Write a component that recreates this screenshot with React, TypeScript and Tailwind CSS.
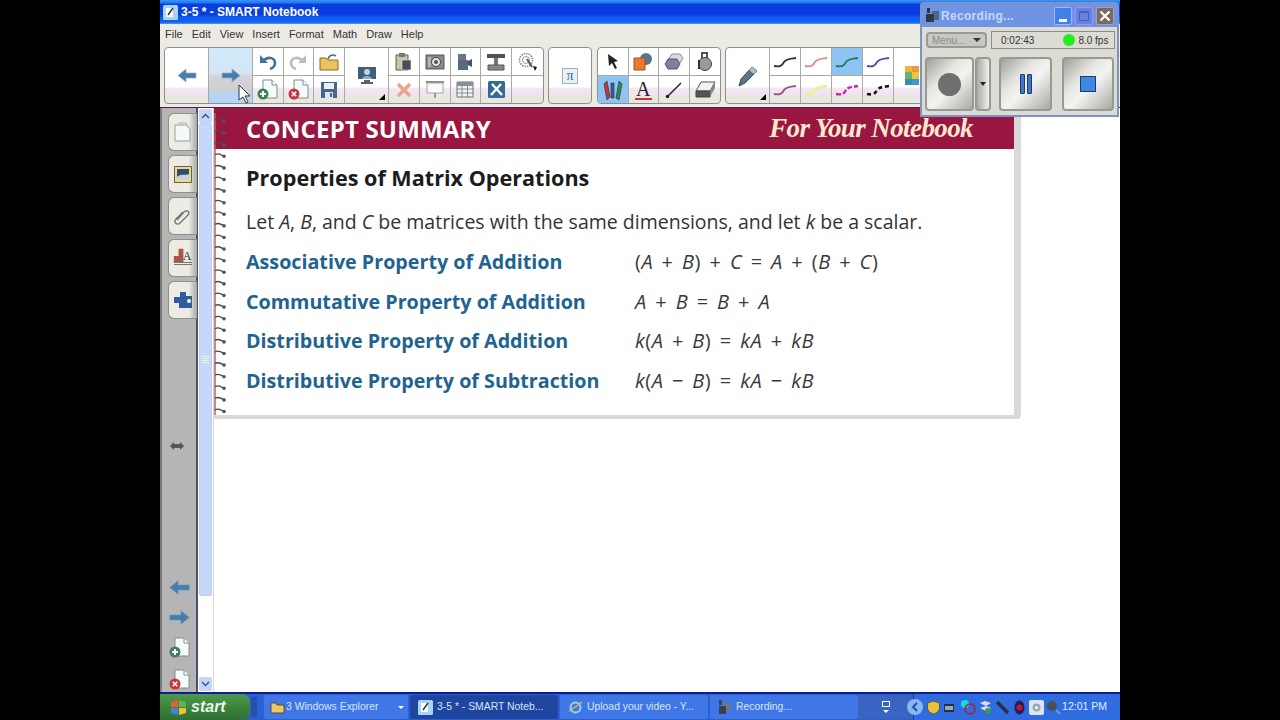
import React from 'react';

const uiFont = "font-['Liberation_Sans',sans-serif]";
const pageFont = "font-['Open_Sans',sans-serif]";

const Arrow = ({ left = false, w = 20, color = '#4b7ca8' }: { left?: boolean; w?: number; color?: string }) => (
  <svg width={w} height={Math.round(w * 0.75)} viewBox="0 0 20 15" className={left ? 'rotate-180' : ''}>
    <path d="M1 5h10V1l8 6.5L11 14v-4H1z" fill={color} stroke="#8fb0cc" strokeWidth="0.8" />
  </svg>
);

const PageIcon = ({ badge }: { badge: 'plus' | 'x' }) => (
  <svg width="21" height="21" viewBox="0 0 21 21">
    <path d="M6 1h9l5 5v13H6z" fill="#f4fbfb" stroke="#8a8a8a" />
    <path d="M15 1v5h5" fill="#fff" stroke="#8a8a8a" />
    <circle cx="6" cy="15" r="5.5" fill={badge === 'plus' ? '#3f7f55' : '#c8343c'} />
    {badge === 'plus' ? (
      <path d="M3 15h6M6 12v6" stroke="#fff" strokeWidth="2" />
    ) : (
      <path d="M3.8 12.8l4.4 4.4M8.2 12.8l-4.4 4.4" stroke="#fff" strokeWidth="1.6" />
    )}
  </svg>
);

const Undo = ({ flip = false, color = '#4a6f96' }: { flip?: boolean; color?: string }) => (
  <svg width="20" height="20" viewBox="0 0 20 20" className={flip ? '-scale-x-100' : ''}>
    <path d="M6 8c5-4 11-2 11 3 0 3-2 5-5 6" fill="none" stroke={color} strokeWidth="2.6" />
    <path d="M2 3v8h8z" fill={color} />
  </svg>
);

const PiBox = () => (
  <div className="relative flex items-center justify-center">
    <svg width="16" height="16" viewBox="0 0 16 16">
      <path d="M.5.500h15v15H.5z" fill="#e8f2f6" stroke="#9ab0bc" />
    </svg>
    <span className="absolute font-['Liberation_Serif',serif] text-[14px] text-[#356a94] leading-none">π</span>
  </div>
);

const Icons: Record<string, React.ReactNode> = {
  undo: <Undo />,
  redo: <Undo flip color="#b4bcc4" />,
  folder: (
    <svg width="20" height="18" viewBox="0 0 20 18">
      <path d="M1 5h6l2 2h10v10H1z" fill="#ecc25f" stroke="#8a6d2a" />
      <path d="M9 6c1-4 5-5 8-3" fill="none" stroke="#566a7a" strokeWidth="1.6" />
    </svg>
  ),
  newPage: <PageIcon badge="plus" />,
  delPage: <PageIcon badge="x" />,
  save: (
    <svg width="18" height="18" viewBox="0 0 18 18">
      <path d="M1 1h16v16H1z" fill="#46668a" />
      <path d="M4 2h10v6H4z" fill="#e8eef2" />
      <path d="M5 11h8v6H5z" fill="#dfe4e8" />
      <path d="M10 12h2v4h-2z" fill="#46668a" />
    </svg>
  ),
  monitor: (
    <svg width="20" height="19" viewBox="0 0 20 19">
      <path d="M1 1h18v12H1z" fill="#3f6076" />
      <circle cx="10" cy="6" r="3" fill="#b9d4e2" />
      <path d="M5 13c1-4 9-4 10 0z" fill="#8fb2c6" />
      <path d="M7 14h6v2h3v2H4v-2h3z" fill="#51636f" />
    </svg>
  ),
  clipboard: (
    <svg width="17" height="19" viewBox="0 0 17 19">
      <path d="M1 3h12v15H1z" fill="#c9c2a8" stroke="#5a5a52" />
      <path d="M4 1h6v4H4z" fill="#777" />
      <path d="M7 8h9v10H7z" fill="#46505a" stroke="#eee" strokeWidth="0.6" />
    </svg>
  ),
  camera: (
    <svg width="20" height="17" viewBox="0 0 20 17">
      <path d="M1 2h18v14H1z" fill="#8b8986" stroke="#555" />
      <circle cx="11" cy="9" r="4.5" fill="#e6e6e2" stroke="#444" />
      <circle cx="11" cy="9" r="2" fill="#555" />
      <path d="M3 4h3v10H3z" fill="#b9b6b0" />
    </svg>
  ),
  video: (
    <svg width="16" height="18" viewBox="0 0 16 18">
      <path d="M1 1h8v6H1z" fill="#6c7680" />
      <path d="M1 7h10v10H1z" fill="#5a6a78" />
      <path d="M11 8l4-2v8l-4-2z" fill="#49525c" />
    </svg>
  ),
  capture: (
    <svg width="20" height="18" viewBox="0 0 20 18">
      <path d="M1 1h18v4H1z" fill="#55534f" />
      <path d="M8 5h4v7H8z" fill="#777" />
      <path d="M2 12h16v5H2z" fill="#8a8884" stroke="#555" />
    </svg>
  ),
  compass: (
    <svg width="20" height="20" viewBox="0 0 20 20">
      <circle cx="8" cy="8" r="6.5" fill="none" stroke="#8a8a8a" strokeWidth="1.6" strokeDasharray="1.5 1" />
      <circle cx="8" cy="8" r="3.5" fill="none" stroke="#9a9a9a" />
      <path d="M9 7l5 8" stroke="#555" strokeWidth="2" />
      <path d="M15 14l4 1-2 4z" fill="#111" />
    </svg>
  ),
  cross: (
    <svg width="16" height="16" viewBox="0 0 16 16">
      <path d="M2 2l12 12M14 2L2 14" stroke="#e8a590" strokeWidth="3.4" />
    </svg>
  ),
  screen: (
    <svg width="20" height="20" viewBox="0 0 20 20">
      <path d="M1 1h18v2H1z" fill="#8f8a7c" />
      <path d="M2 3h16v10H2z" fill="#f6fbfa" stroke="#a8a8a0" />
      <path d="M10 13v5" stroke="#777" strokeWidth="1.4" />
    </svg>
  ),
  table: (
    <svg width="18" height="17" viewBox="0 0 18 17">
      <path d="M1 1h16v15H1z" fill="#f2f4f2" stroke="#6a7278" />
      <path d="M1 4.5h16M1 8h16M1 12h16M6 1v15M11.500 1v15" stroke="#7c8488" strokeWidth="0.9" />
      <path d="M1 1h16v3.500H1z" fill="#8a9298" />
    </svg>
  ),
  tools: (
    <svg width="17" height="17" viewBox="0 0 17 17">
      <rect width="17" height="17" rx="1.500" fill="#356a94" />
      <path d="M4 3l10 11M13 3L3 14" stroke="#fff" strokeWidth="2.400" />
    </svg>
  ),
  pointer: (
    <svg width="14" height="17" viewBox="0 0 14 17">
      <path d="M2 1l10 7-4 1 3 6-2 1-3-6-3 3z" fill="#222" />
    </svg>
  ),
  shapes: (
    <svg width="20" height="19" viewBox="0 0 20 19">
      <circle cx="13" cy="7" r="6" fill="#56788e" />
      <path d="M1 6h11v12H1z" fill="#ea7a2a" stroke="#a8501a" />
    </svg>
  ),
  hex: (
    <svg width="20" height="17" viewBox="0 0 20 17">
      <path d="M8 1h8l3 4-3 5H8L5 5z" fill="#d7dce2" stroke="#8a8a96" />
      <path d="M4 6h9l3 5-3 5H4l-3-5z" fill="#8a7aa2" stroke="#5e5274" />
    </svg>
  ),
  fill: (
    <svg width="18" height="20" viewBox="0 0 18 20">
      <path d="M6 1h5v6H6z" fill="none" stroke="#555" strokeWidth="2" />
      <circle cx="9" cy="12" r="6.500" fill="#9a9a9a" stroke="#444" />
      <path d="M3 8v9" stroke="#333" strokeWidth="2" />
    </svg>
  ),
  pens: (
    <svg width="22" height="22" viewBox="0 0 22 22">
      <path d="M2 5l3-3 3 16-3 3z" fill="#c43a3a" stroke="#334" strokeWidth="0.7" />
      <path d="M9 4h3v15H9z" fill="#3a5f9a" stroke="#334" strokeWidth="0.7" />
      <path d="M17 2l3 3-3 16-3-2z" fill="#2f8a54" stroke="#334" strokeWidth="0.7" />
    </svg>
  ),
  textA: (
    <div className="flex flex-col items-center">
      <span className="font-['Liberation_Serif',serif] text-[20px] leading-[18px] text-[#222]">A</span>
      <span className="w-[17px] h-[2px] bg-[#c33]" />
    </div>
  ),
  line: (
    <svg width="18" height="18" viewBox="0 0 18 18">
      <path d="M2 16L16 2" stroke="#222" strokeWidth="1.500" />
      <circle cx="2.500" cy="15.500" r="1.800" fill="#222" />
    </svg>
  ),
  eraser: (
    <svg width="22" height="19" viewBox="0 0 22 19">
      <path d="M7 2h14l-5 9H2z" fill="#f2f2f2" stroke="#555" />
      <path d="M2 11h14v6H2z" fill="#555" stroke="#444" />
      <path d="M16 11l5-9v6l-5 9z" fill="#888" />
    </svg>
  ),
};

const Cell = ({ icon, active, noBorderRight }: { icon?: string; active?: boolean; noBorderRight?: boolean }) => (
  <div
    className={`h-[28px] flex items-center justify-center border-b border-[#a9a9a5] ${noBorderRight ? '' : 'border-r'} ${active ? 'bg-[#8ec4f4]' : ''}`}
  >
    {icon && Icons[icon]}
  </div>
);

const Squiggle = ({ color, dash, width = 1.8 }: { color: string; dash?: string; width?: number }) => (
  <svg width="24" height="14" viewBox="0 0 24 14">
    <path d="M1 11c6 1 8 0 10-4 2-3 6-3 12-4" fill="none" stroke={color} strokeWidth={width} strokeDasharray={dash} />
  </svg>
);

const Group = ({ children, className = '' }: { children: React.ReactNode; className?: string }) => (
  <div
    className={`h-[57px] flex shrink-0 rounded-[4px] border border-[#8f8f8f] overflow-hidden bg-[linear-gradient(#ffffff_0%,#ffffff_71%,#f4e7f4_73%,#f0e4f0_84%,#e8e7e0_87%,#e8e7e0_100%)] ${className}`}
  >
    {children}
  </div>
);

const BigCell = ({ children, w, active }: { children?: React.ReactNode; w: string; active?: boolean }) => (
  <div
    className={`relative h-full flex items-center justify-center border-r border-[#a9a9a5] shrink-0 ${w} ${active ? 'bg-[linear-gradient(#cfeafc_0%,#d4e6f6_45%,#d6d2dc_52%,#cfcfcf_78%,#b4d6f6_82%,#b4d6f6_100%)]' : ''}`}
  >
    {children}
  </div>
);

const Corner = () => <span className="absolute right-[3px] bottom-[3px] w-0 h-0 border-l-[6px] border-l-transparent border-b-[6px] border-b-black" />;

const penColours = [
  { color: '#333333' },
  { color: '#e38a8a' },
  { color: '#1f7a5a', active: true },
  { color: '#5f45a0' },
  { color: '#9a4f8c' },
  { color: '#f4ef80', width: 2.6 },
  { color: '#d020b0', dash: '5 2', width: 2.4 },
  { color: '#111111', dash: '4 3', width: 2.6 },
];

const Toolbar = () => (
  <div className="h-[63px] shrink-0 bg-[#ecebe3] flex items-start pl-[4px] pt-[3px] overflow-hidden">
    <Group className="w-[380px]">
      <BigCell w="w-[44px]"><Arrow left /></BigCell>
      <BigCell w="w-[44px]" active><Arrow /></BigCell>
      <div className="grid grid-cols-3 w-[92px] shrink-0">
        {['undo', 'redo', 'folder', 'newPage', 'delPage', 'save'].map((n) => <Cell key={n} icon={n} />)}
      </div>
      <BigCell w="w-[44px]">{Icons.monitor}<Corner /></BigCell>
      <div className="grid grid-cols-5 w-[154px] shrink-0">
        {['clipboard', 'camera', 'video', 'capture', 'compass', 'cross', 'screen', 'table', 'tools', ''].map((n, i) => (
          <Cell key={i} icon={n} noBorderRight={i === 4 || i === 9} />
        ))}
      </div>
    </Group>
    <Group className="w-[44px] ml-[4px] items-center justify-center">
      <PiBox />
    </Group>
    <Group className="ml-[5px] w-[124px]">
      <div className="grid grid-cols-4 w-full">
        {['pointer', 'shapes', 'hex', 'fill', 'pens', 'textA', 'line', 'eraser'].map((n, i) => (
          <Cell key={n} icon={n} active={i === 4} noBorderRight={i === 3 || i === 7} />
        ))}
      </div>
    </Group>
    <Group className="ml-[4px] w-[240px] rounded-r-none items-start">
      <BigCell w="w-[44px]">
        <svg width="22" height="22" viewBox="0 0 22 22">
          <path d="M15 2l5 4L8 18l-6 3 2-7z" fill="#5d7488" stroke="#3c4a58" />
          <path d="M15 2l5 4-3 3-5-4z" fill="#aebccb" />
        </svg>
        <Corner />
      </BigCell>
      <div className="grid grid-cols-4 w-[124px] shrink-0">
        {penColours.map((p, i) => (
          <div
            key={i}
            className={`h-[28px] flex items-center justify-center border-b border-r border-[#a9a9a5] ${p.active ? 'bg-[#8ec4f4]' : ''}`}
          >
            <Squiggle color={p.color} dash={p.dash} width={p.width} />
          </div>
        ))}
      </div>
      <div className="ml-[11px] mt-[18px] w-[14px] h-[19px] grid grid-cols-2 grid-rows-3 shrink-0">
        <span className="bg-[#e8b83a]" />
        <span className="bg-[#e89a3a]" />
        <span className="bg-[#6ab06a]" />
        <span className="bg-[#e8c83a]" />
        <span className="bg-[#3a8ab8]" />
        <span className="bg-[#3a9ac8]" />
      </div>
    </Group>
  </div>
);

const Tab = ({ children }: { children: React.ReactNode }) => (
  <div className="w-[29px] h-[38px] ml-[6px] rounded-l-[6px] border border-r-0 border-[#8f8f88] bg-[linear-gradient(90deg,#ecece4_70%,#a9a9a4_100%)] flex items-center justify-center pr-[1px]">
    {children}
  </div>
);

const Sidebar = () => (
  <div className="w-[38px] shrink-0 bg-[#b5b5b5] border-l-2 border-r-2 border-l-[#7a7a7a] border-r-[#4a5070] flex flex-col items-start">
    <div className="flex flex-col gap-[4px] pt-[5px]">
      <Tab>
        <svg width="17" height="20" viewBox="0 0 17 20">
          <path d="M1 3h11l4 4v12H1z" fill="#f2fafa" stroke="#9a9a9a" />
          <path d="M4 1h9v3" fill="none" stroke="#b5b5b5" />
        </svg>
      </Tab>
      <Tab>
        <svg width="18" height="17" viewBox="0 0 18 17">
          <path d="M.5.500h17v16H.5z" fill="#e8d8a0" stroke="#76612a" />
          <path d="M3 3h12v10H3z" fill="#2f4f66" />
          <path d="M3 11c4-4 8-1 12-3v5H3z" fill="#c2d4de" />
        </svg>
      </Tab>
      <Tab>
        <svg width="19" height="19" viewBox="0 0 19 19">
          <path d="M5 12l7-8c3-3 6 0 4 3l-8 8c-3 3-7-1-4-4l7-7" fill="none" stroke="#777" strokeWidth="1.400" transform="translate(-1 1)" />
        </svg>
      </Tab>
      <Tab>
        <div className="flex flex-col items-center leading-none">
          <span className="font-['Liberation_Serif',serif] text-[12px] leading-[11px] text-[#333] tracking-tight">
            <span className="text-[#a8574a]">▟</span>A
          </span>
          <span className="w-[18px] h-[3px] border-y border-[#777]" />
        </div>
      </Tab>
      <Tab>
        <svg width="20" height="18" viewBox="0 0 20 18">
          <path d="M7 1h6v4h6v12H6v-5H1V6h6z" fill="#2f5c9a" />
          <circle cx="16" cy="10" r="2" fill="#fff" />
        </svg>
      </Tab>
    </div>
    <div className="mt-[122px] ml-[7px]">
      <svg width="16" height="10" viewBox="0 0 16 10">
        <path d="M1 5l4-4v2h6V1l4 4-4 4V7H5v2z" fill="#555" />
      </svg>
    </div>
    <div className="mt-auto flex flex-col items-center gap-[11px] ml-[6px] pb-[2px]">
      <Arrow left w={23} />
      <div className="mt-[2px] flex"><Arrow w={23} /></div>
      <PageIcon badge="plus" />
      <PageIcon badge="x" />
    </div>
  </div>
);

const Scrollbar = () => (
  <div className="w-[16px] shrink-0 bg-white border-r border-[#d8d8d8] flex flex-col pt-[1px]">
    <div className="h-[14px] mx-[1px] rounded-[2px] bg-[#c4d5f8] flex items-center justify-center">
      <svg width="9" height="6" viewBox="0 0 9 6"><path d="M1 5l3.500-3.500L8 5" fill="none" stroke="#3a5a8a" strokeWidth="1.500" /></svg>
    </div>
    <div className="h-[473px] mx-[1px] rounded-[2px] bg-[#c5d7fb] border border-[#bcd0f4] flex flex-col items-center justify-center gap-[1px]">
      <span className="w-[7px] h-px bg-[#e8f0fe]" />
      <span className="w-[7px] h-px bg-[#e8f0fe]" />
      <span className="w-[7px] h-px bg-[#e8f0fe]" />
      <span className="w-[7px] h-px bg-[#e8f0fe]" />
    </div>
    <div className="flex-1" />
    <div className="h-[14px] mx-[1px] mb-[1px] rounded-[2px] bg-[#c4d5f8] flex items-center justify-center">
      <svg width="9" height="6" viewBox="0 0 9 6"><path d="M1 1l3.500 3.500L8 1" fill="none" stroke="#3a5a8a" strokeWidth="1.500" /></svg>
    </div>
  </div>
);

const spiralRows = Array.from({ length: 26 }, (_, i) => i);

const Spiral = () => (
  <svg className="absolute left-0 top-[5px]" width="14" height="305" viewBox="0 0 14 305">
    <path d="M1 0v302" stroke="#b9606e" strokeWidth="1.500" />
    {spiralRows.map((i) => {
      const y = 7 + i * 11.6;
      return (
        <g key={i}>
          <path d={`M1 ${y}c3-2 5-1 8 1`} fill="none" stroke="#4a4a4a" strokeWidth="1.300" />
          <circle cx="10" cy={y + 1.5} r="1.800" fill="#555" />
        </g>
      );
    })}
  </svg>
);

const rows: { title: string; formula: React.ReactNode }[] = [
  {
    title: 'Associative Property of Addition',
    formula: <>(<i>A</i> + <i>B</i>) + <i>C</i> = <i>A</i> + (<i>B</i> + <i>C</i>)</>,
  },
  { title: 'Commutative Property of Addition', formula: <><i>A</i> + <i>B</i> = <i>B</i> + <i>A</i></> },
  { title: 'Distributive Property of Addition', formula: <><i>k</i>(<i>A</i> + <i>B</i>) = <i>kA</i> + <i>kB</i></> },
  { title: 'Distributive Property of Subtraction', formula: <><i>k</i>(<i>A</i> − <i>B</i>) = <i>kA</i> − <i>kB</i></> },
];

const ConceptCard = () => (
  <div className="relative flex-1 bg-white overflow-hidden">
    <div className={`w-[807px] h-[311px] bg-[#d9d9d9] rounded-br-[4px] ${pageFont}`}>
      <div className="w-[800px] h-[307px] bg-white">
        <div className="h-[41px] bg-[#991640] rounded-tr-[8px] flex items-center justify-between pl-[32px] pr-[41px]">
          <span className="text-[24px] font-bold text-white tracking-[0.2px] whitespace-nowrap">CONCEPT SUMMARY</span>
          <span className="font-['Liberation_Serif',serif] italic font-bold text-[27px] text-[#fde9cf] tracking-[-0.6px] whitespace-nowrap">For Your Notebook</span>
        </div>
        <div className="pl-[32px]">
          <div className="text-[21.600px] font-bold text-[#1c1c1c] leading-[28px] mt-[15px]">Properties of Matrix Operations</div>
          <div className="text-[19.500px] text-[#333] leading-[28px] mt-[16px]">
            Let <i>A</i>, <i>B</i>, and <i>C</i> be matrices with the same dimensions, and let <i>k</i> be a scalar.
          </div>
          <div className="flex flex-col gap-[11.600px] mt-[11px]">
            {rows.map((r) => (
              <div key={r.title} className="grid grid-cols-[389px_1fr] h-[28px] items-center">
                <span className="text-[19.700px] font-bold text-[#1f6390]">{r.title}</span>
                <span className="text-[20px] text-[#3a3a3a] tracking-[0.5px] [word-spacing:2.8px] whitespace-pre">{r.formula}</span>
              </div>
            ))}
          </div>
        </div>
      </div>
    </div>
    <Spiral />
  </div>
);

const RaisedButton = ({ w, children }: { w: string; children: React.ReactNode }) => (
  <div className={`h-[54px] ${w} shrink-0 rounded-[4px] border-2 border-[#9a9a94] bg-[linear-gradient(135deg,#9f9f9c_0%,#e4e4e0_35%,#f4f4f2_55%,#a8a8a4_100%)] flex items-center justify-center`}>
    {children}
  </div>
);

const RecorderWindow = () => (
  <div className={`absolute left-[760px] top-[2px] w-[199px] h-[115px] bg-[#dddcd4] border-2 border-[#7e93bd] rounded-t-[4px] flex flex-col ${uiFont}`}>
    <div className="h-[23px] bg-[#6f94e6] flex items-center pl-[3px] pr-[3px] shrink-0">
      <svg width="16" height="18" viewBox="0 0 16 18" className="shrink-0">
        <path d="M2 1h3v5H2z" fill="#333" />
        <path d="M7 4h7v9H7z" fill="#456a86" />
        <path d="M1 7h8v8H1z" fill="#2c3a46" />
      </svg>
      <span className="text-[12px] text-[#c9d8f6] font-bold tracking-[0.3px] whitespace-nowrap">Recording...</span>
      <div className="ml-auto flex gap-[3px]">
        <div className="w-[18px] h-[18px] rounded-[2px] bg-[#3f80ea] border border-[#9dbbf2] flex items-end justify-center pb-[2px]">
          <span className="w-[8px] h-[3px] bg-white" />
        </div>
        <div className="w-[18px] h-[18px] rounded-[2px] bg-[#6a80de] border border-[#8a9ce6] flex items-center justify-center">
          <span className="w-[10px] h-[10px] border border-[#4d5fbd] border-t-2" />
        </div>
        <div className="w-[18px] h-[18px] rounded-[2px] bg-[#7b6a66] border border-[#a2a2b4] flex items-center justify-center">
          <svg width="12" height="12" viewBox="0 0 12 12"><path d="M1.500 1.500l9 9M10.500 1.500l-9 9" stroke="#fff" strokeWidth="2.200" /></svg>
        </div>
      </div>
    </div>
    <div className="flex items-center gap-[4px] pl-[4px] pr-[2px] pt-[4px]">
      <div className="w-[61px] h-[16px] rounded-[4px] border-2 border-[#9a9a94] bg-[#c8c8c2] flex items-center pl-[4px] text-[10px] text-[#8a8a84]">
        Menu...
        <span className="ml-auto mr-[4px] w-0 h-0 border-x-[4px] border-x-transparent border-t-[4px] border-t-[#333]" />
      </div>
      <div className="flex-1 h-[18px] border border-[#8c8c86] flex items-center pl-[9px] text-[10px] text-[#333] whitespace-nowrap">
        0:02:43
        <span className="ml-[29px] w-[12px] h-[12px] rounded-full bg-[#1ef01e] shrink-0" />
        <span className="ml-[3px]">8.0 fps</span>
      </div>
    </div>
    <div className="flex items-center pl-[3px] pt-[8px]">
      <RaisedButton w="w-[49px]"><span className="w-[23px] h-[23px] rounded-full bg-[#6f6f6f]" /></RaisedButton>
      <div className="w-[16px] h-[54px] ml-[1px] rounded-[4px] border-2 border-[#9a9a94] bg-[linear-gradient(90deg,#a8a8a4,#f0f0ee)] flex items-center justify-center">
        <span className="w-0 h-0 border-x-[3px] border-x-transparent border-t-[4px] border-t-[#222]" />
      </div>
      <div className="ml-[8px]">
        <RaisedButton w="w-[53px]">
          <div className="flex gap-[2px]">
            <span className="w-[5px] h-[20px] rounded-[1px] bg-[#3f78c8] border border-[#1f3a66]" />
            <span className="w-[5px] h-[20px] rounded-[1px] bg-[#3f78c8] border border-[#1f3a66]" />
          </div>
        </RaisedButton>
      </div>
      <div className="ml-[10px]">
        <RaisedButton w="w-[52px]"><span className="w-[16px] h-[16px] bg-[#3d8ae6] border border-[#1f3a66]" /></RaisedButton>
      </div>
    </div>
  </div>
);

const TaskButton = ({ w, active, icon, label, extra }: { w: string; active?: boolean; icon: React.ReactNode; label: string; extra?: React.ReactNode }) => (
  <div className={`h-[24px] ${w} shrink-0 rounded-[2px] flex items-center pl-[8px] gap-[4px] text-[10.400px] text-[#d8e4fb] ${active ? 'bg-[#1e469f]' : 'bg-[#3f78e6]'}`}>
    {icon}
    <span className="whitespace-pre">{label}</span>
    {extra}
  </div>
);

const NotebookIcon = () => (
  <svg width="15" height="15" viewBox="0 0 15 15" className="shrink-0">
    <rect width="15" height="15" rx="1.500" fill="#a8d4f0" />
    <path d="M3 3h7v9H3z" fill="#fff" />
    <path d="M5 10l5-7" stroke="#334" strokeWidth="1.500" />
  </svg>
);

const RecIcon = () => (
  <svg width="14" height="16" viewBox="0 0 14 16" className="shrink-0">
    <path d="M1 1h3v5H1z" fill="#444" />
    <path d="M5 4h8v7H5z" fill="#6c7a86" />
    <path d="M1 7h7v8H1z" fill="#39424c" />
  </svg>
);

const TrayIcons = () => (
  <div className="flex items-center gap-[2px]">
    <svg width="15" height="15" viewBox="0 0 15 15"><path d="M7.500 1l6 2v5c0 3-3 5-6 6-3-1-6-3-6-6V3z" fill="#e8c33a" stroke="#5a5a3a" /></svg>
    <svg width="15" height="15" viewBox="0 0 15 15"><path d="M1 4h10v8H1z" fill="#26303c" /><path d="M2 6h8v4H2z" fill="#9ab" /></svg>
    <svg width="16" height="16" viewBox="0 0 16 16"><circle cx="5" cy="5" r="4" fill="#18d8e0" /><circle cx="10" cy="10" r="5" fill="none" stroke="#b02030" strokeWidth="1.500" /></svg>
    <svg width="15" height="15" viewBox="0 0 15 15"><path d="M2 3l5-2 6 2-5 3zM2 8l6-2 5 2-5 3z" fill="#dde" /><circle cx="10" cy="11" r="3" fill="#3a9a4a" /></svg>
    <svg width="15" height="15" viewBox="0 0 15 15"><path d="M2 2l11 11" stroke="#2a2f40" strokeWidth="3.500" /></svg>
    <svg width="15" height="15" viewBox="0 0 15 15"><ellipse cx="7.500" cy="7.500" rx="5" ry="7" fill="#2a1a5a" /><circle cx="7.500" cy="7.500" r="3" fill="#c0182a" /></svg>
    <svg width="15" height="15" viewBox="0 0 15 15"><rect width="15" height="15" rx="2" fill="#dde6f6" /><circle cx="7.500" cy="7.500" r="4" fill="#9aa" /><circle cx="7.500" cy="7.500" r="1.500" fill="#fff" /></svg>
    <svg width="15" height="15" viewBox="0 0 15 15"><circle cx="6" cy="6" r="5" fill="#4a5058" /><path d="M10 10l4 4" stroke="#8aa0d0" strokeWidth="1.500" /></svg>
  </div>
);

const Taskbar = () => (
  <div className={`h-[28px] shrink-0 border-t-2 border-[#0c1f8c] bg-[#2c5fd6] flex items-center ${uiFont}`}>
    <div className="w-[90px] h-full rounded-r-[8px] bg-[linear-gradient(#4c9a4c,#38803c_60%,#2f7034)] flex items-center pl-[10px] gap-[4px] shrink-0">
      <svg width="17" height="17" viewBox="0 0 17 17">
        <path d="M1 3l7-2v7H1z" fill="#e8622c" />
        <path d="M9 1l7 2v5H9z" fill="#6ab04a" />
        <path d="M1 9h7v7l-7-2z" fill="#4a80d8" />
        <path d="M9 9h7v5l-7 2z" fill="#eec23a" />
      </svg>
      <span className="italic font-bold text-[16px] text-[#eef5e8]">start</span>
    </div>
    <div className="w-[6px] h-[20px] ml-[1px] bg-[#2a4fa8] rounded-[1px] shrink-0" />
    <div className="ml-[7px] flex items-center gap-[2px] shrink-0">
      <TaskButton
        w="w-[144px]"
        label="3 Windows Explorer"
        icon={
          <svg width="15" height="13" viewBox="0 0 15 13" className="shrink-0 -ml-[2px] -mr-[3px]">
            <path d="M1 2h5l1 2h7v8H1z" fill="#e8c868" stroke="#5c4c28" />
          </svg>
        }
        extra={<span className="ml-auto mr-[4px] w-0 h-0 border-x-[3px] border-x-transparent border-t-[3px] border-t-white" />}
      />
      <TaskButton w="w-[148px]" active label="3-5 * - SMART Noteb..." icon={<NotebookIcon />} />
      <TaskButton
        w="w-[148px]"
        label="Upload your video - Y..."
        icon={
          <svg width="15" height="15" viewBox="0 0 15 15" className="shrink-0">
            <circle cx="7.500" cy="7.500" r="5" fill="none" stroke="#9ad0f0" strokeWidth="2" />
            <path d="M1 11C5 9 10 5 14 2" stroke="#e8c33a" strokeWidth="1.200" />
          </svg>
        }
      />
      <TaskButton w="w-[148px]" label="Recording..." icon={<RecIcon />} />
    </div>
    <div className="w-[55px] h-[24px] bg-[#3a64c2] flex flex-col items-center justify-center gap-[3px] shrink-0">
      <span className="w-[8px] h-[6px] border border-white bg-[#3a64c2]" />
      <span className="w-0 h-0 border-x-[3px] border-x-transparent border-t-[3px] border-t-white" />
    </div>
    <div className="flex-1 h-full bg-[#2f6ce0] flex items-center border-l border-[#1a3a9a]">
      <span className="w-[16px] h-[16px] -ml-[7px] rounded-full bg-[#8ab8ee] flex items-center justify-center mr-[3px] shrink-0">
        <svg width="8" height="10" viewBox="0 0 8 10"><path d="M6 1L2 5l4 4" fill="none" stroke="#1f4fae" strokeWidth="2" /></svg>
      </span>
      <TrayIcons />
      <span className="ml-auto mr-[13px] text-[10.500px] text-[#e3edfc] whitespace-nowrap">12:01 PM</span>
    </div>
  </div>
);

const menuItems = ['File', 'Edit', 'View', 'Insert', 'Format', 'Math', 'Draw', 'Help'];

export default function App() {
  return (
    <div className="h-[720px] bg-black overflow-hidden">
      <div className="relative w-[960px] h-[720px] mx-auto flex flex-col bg-white overflow-hidden">
        {/* Title bar */}
        <div className={`h-[24px] shrink-0 flex items-center pl-[3px] bg-[linear-gradient(#3d93f5_0%,#1e78f0_12%,#0a3fdd_18%,#0a3ce0_60%,#0f5cf0_72%,#0f62f2_92%,#5a9ae8_100%)] ${uiFont}`}>
          <NotebookIcon />
          <span className="ml-[3px] text-[12px] font-bold text-white">3-5 * - SMART Notebook</span>
        </div>
        {/* Menu */}
        <div className={`h-[20px] shrink-0 bg-[#ecebe3] flex items-center pl-[5px] gap-[9px] text-[11px] text-[#333] ${uiFont}`}>
          {menuItems.map((m) => <span key={m}>{m}</span>)}
        </div>
        <Toolbar />
        <div className="h-px bg-[#5a1a5a] shrink-0" />
        {/* Workspace */}
        <div className="flex-1 flex min-h-0">
          <Sidebar />
          <Scrollbar />
          <ConceptCard />
        </div>
        <Taskbar />

        <RecorderWindow />
        {/* Mouse cursor */}
        <svg className="absolute left-[78px] top-[84px]" width="13" height="20" viewBox="0 0 13 20">
          <path d="M1 1v15l4-3 3 6 2-1-3-6h5z" fill="#fff" stroke="#333" />
        </svg>
      </div>
    </div>
  );
}
